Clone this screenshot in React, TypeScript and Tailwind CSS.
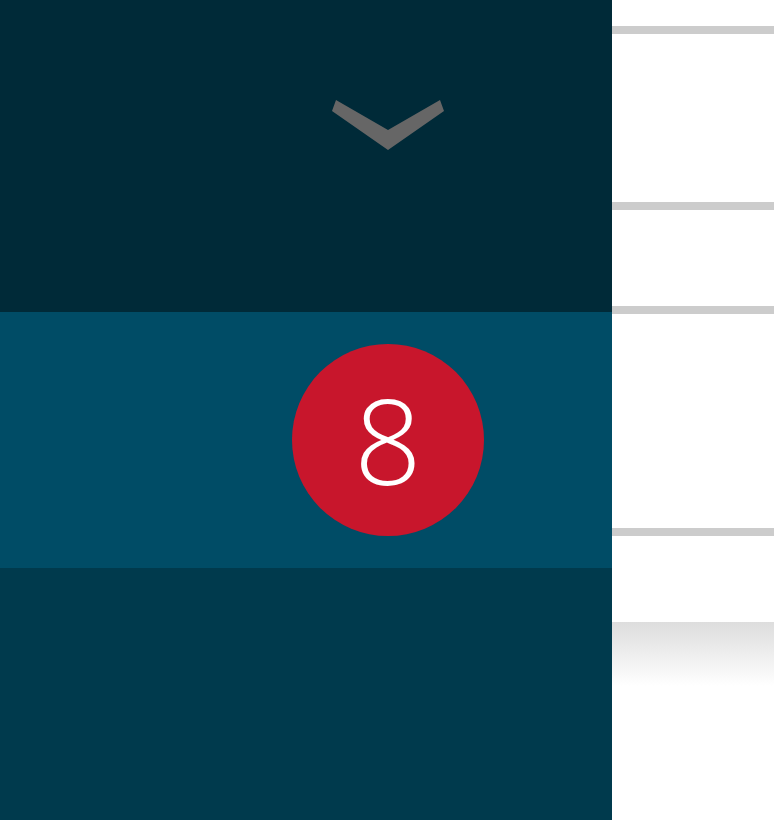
export default function App() {
  return (
    <div className="flex h-[820px] w-[774px] overflow-hidden bg-white">
      {/* Left panel */}
      <div className="flex w-[612px] shrink-0 flex-col">
        <div className="h-[312px] bg-[#002a38] pt-[95px]">
          <svg
            className="ml-[328px] block"
            width="120"
            height="60"
            viewBox="0 0 120 60"
          >
            <polygon points="8,5 60,35 112,5 116,16 60,55 4,16" fill="#666666" />
          </svg>
        </div>
        <div className="flex h-[256px] items-center bg-[#004c66]">
          <div className="ml-[292px] flex h-[192px] w-[192px] items-center justify-center rounded-full bg-[#c8162c]">
            <span className="font-['Open_Sans',sans-serif] text-[118px] font-light leading-none text-white">
              8
            </span>
          </div>
        </div>
        <div className="flex-1 bg-[#003a4d]" />
      </div>

      {/* Right panel */}
      <div className="flex flex-1 flex-col bg-white">
        <div className="h-[26px]" />
        <div className="h-[8px] bg-[#cccccc]" />
        <div className="h-[168px]" />
        <div className="h-[8px] bg-[#cccccc]" />
        <div className="h-[96px]" />
        <div className="h-[8px] bg-[#cccccc]" />
        <div className="h-[214px]" />
        <div className="h-[8px] bg-[#cccccc]" />
        <div className="h-[86px]" />
        <div className="h-[64px] bg-gradient-to-b from-[#dddddd] to-white" />
      </div>
    </div>
  );
}
